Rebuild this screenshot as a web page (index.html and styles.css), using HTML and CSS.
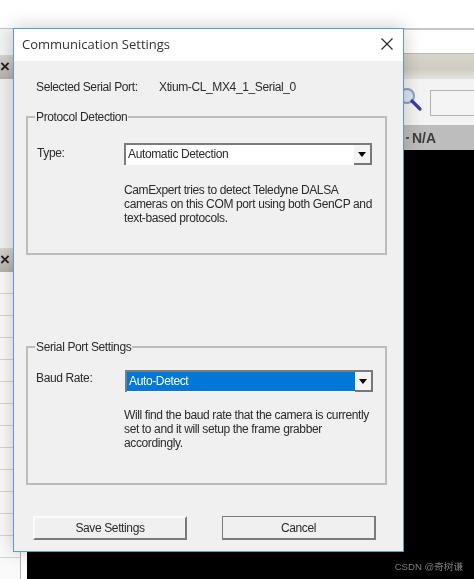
FILE: index.html
```html
<!DOCTYPE html>
<html lang="en">
<head>
<meta charset="utf-8">
<title>Communication Settings</title>
<link rel="stylesheet" href="styles.css">
</head>
<body>
<div class="desktop">
  <div class="win-left">
    <div class="left-top"></div>
    <div class="left-bar"><span class="left-x">×</span></div>
    <div class="left-mid"></div>
    <div class="left-bar"><span class="left-x">×</span></div>
    <div class="left-list">
      <div class="left-row"></div><div class="left-row"></div><div class="left-row"></div><div class="left-row"></div>
      <div class="left-row"></div><div class="left-row"></div><div class="left-row"></div><div class="left-row"></div>
      <div class="left-row"></div><div class="left-row"></div><div class="left-row"></div><div class="left-row"></div>
      <div class="left-row"></div><div class="left-row"></div>
    </div>
  </div>

  <div class="win-main">
    <div class="main-top"></div>
    <div class="main-caption"></div>
    <div class="main-toolbar">
      <svg class="search" width="24" height="28" viewBox="0 0 24 28" aria-hidden="true">
        <circle cx="8" cy="10" r="7" fill="#dce6f2" stroke="#8a9fc0" stroke-width="2"/>
        <path d="M13 15l8 8" stroke="#3a3ab0" stroke-width="3.2" stroke-linecap="round"/>
      </svg>
      <div class="main-input"></div>
    </div>
    <div class="main-status"><span class="status-dot"></span><span>N/A</span></div>
    <div class="main-view"><span class="watermark">CSDN @奇树谦</span></div>
  </div>

  <div class="dialog">
    <div class="titlebar">
      <span class="title">Communication Settings</span>
      <svg class="close" width="12" height="12" viewBox="0 0 12 12" aria-hidden="true">
        <path d="M.5.5l11 11M11.5.5l-11 11" stroke="#2b2b2b" stroke-width="1.2" fill="none"/>
      </svg>
    </div>
    <div class="body">
      <div class="port-row">
        <span class="port-label">Selected Serial Port:</span>
        <span>Xtium-CL_MX4_1_Serial_0</span>
      </div>

      <fieldset class="group group-protocol">
        <legend>Protocol Detection</legend>
        <div class="field field-protocol">
          <span class="field-label">Type:</span>
          <div class="combo">
            <span class="combo-value">Automatic Detection</span>
            <span class="combo-btn"><span class="arrow"></span></span>
          </div>
        </div>
        <p class="note note-protocol">CamExpert tries to detect Teledyne DALSA<br>cameras on this COM port using both GenCP and<br>text-based protocols.</p>
      </fieldset>

      <fieldset class="group group-serial">
        <legend>Serial Port Settings</legend>
        <div class="field field-serial">
          <span class="field-label">Baud Rate:</span>
          <div class="combo">
            <span class="combo-value selected">Auto-Detect</span>
            <span class="combo-btn"><span class="arrow"></span></span>
          </div>
        </div>
        <p class="note note-serial">Will find the baud rate that the camera is currently<br>set to and it will setup the frame grabber<br>accordingly.</p>
      </fieldset>

      <div class="actions">
        <button class="btn" type="button">Save Settings</button>
        <button class="btn btn-default" type="button">Cancel</button>
      </div>
    </div>
  </div>
</div>
</body>
</html>
```
FILE: styles.css
```css
* { box-sizing: border-box; }
html, body { margin: 0; padding: 0; background: #fff; }
body { font-family: "Liberation Sans", Arial, sans-serif; font-size: 12px; letter-spacing: -.37px; line-height: 14px; color: #2a2a2a; }

.desktop { position: relative; width: 474px; height: 579px; overflow: hidden; background: #fff; filter: blur(.35px); }

/* background windows */
.win-left { position: absolute; left: 0; top: 28px; width: 27px; height: 551px; display: flex; flex-direction: column; }
.left-top { height: 27px; background: #f4f4f4; border-top: 1px solid #c4c4c4; }
.left-bar { height: 24px; background: linear-gradient(#d8d5cf, #b4b2ac); display: flex; align-items: center; }
.left-x { font-size: 17px; font-weight: bold; color: #222; }
.left-mid { height: 169px; background: #f1f1f1; }
.left-list { flex: 1; overflow: hidden; background: #fff; border-right: 6px solid #fff; }
.left-row { height: 22px; width: 21px; border-bottom: 1px solid #d4d4d4; border-right: 1px solid #b4b4b4; background: #fafafa; }

.win-main { position: absolute; left: 27px; top: 28px; right: 0; bottom: 0; display: flex; flex-direction: column; }
.main-top { height: 26px; background: #fff; border-top: 2px solid #c8c8c8; border-bottom: 1px solid #b8b8b8; }
.main-caption { height: 25px; background: linear-gradient(#d9d5cb, #cfccc3 60%, #e4e2dc); }
.main-toolbar { height: 46px; background: #f3f3f3; display: flex; justify-content: flex-end; align-items: flex-start; }
.search { margin-top: 7px; margin-right: 7px; }
.main-input { width: 44px; height: 26px; margin-top: 11px; background: #f4f4f4; border: 1px solid #b2b2b2; border-right: 0; }
.main-status { height: 25px; background: #bdbdbd; display: flex; align-items: center; justify-content: flex-end; gap: 3px; padding-right: 38px; font-size: 14px; letter-spacing: 0; font-weight: bold; color: #3c3c3c; }
.status-dot { width: 3px; height: 2px; background: #555; }
.main-view { flex: 1; background: #000; display: flex; align-items: flex-end; justify-content: flex-end; padding: 0 11px 6px 0; }
.watermark { font-family: "Liberation Sans", "Noto Sans CJK SC", sans-serif; font-size: 9.6px; letter-spacing: 0; line-height: 13px; color: #7e7e7e; }

/* dialog */
.dialog { position: absolute; left: 13px; top: 28px; width: 391px; height: 524px; display: flex; flex-direction: column; background: #f0f0f0; border: 1.5px solid #5b9bd5; box-shadow: 0 0 18px rgba(0, 0, 0, .22); }
.titlebar { height: 32px; flex: none; background: #fff; display: flex; align-items: center; justify-content: space-between; padding: 0 10px 2px 8px; }
.title { font-family: "Open Sans", sans-serif; font-size: 13px; letter-spacing: 0; color: #333; }
.close { display: block; }

.body { flex: 1; padding: 19px 0 0 12px; }
.port-row { display: grid; grid-template-columns: 123px auto; padding-left: 10px; }
.group { margin: 16px 0 0; padding: 0 0 0 9px; width: 361px; border: 2px solid #bcbcbc; }
.group legend { margin-left: -2px; padding: 0 1px; line-height: 14px; }
.group-protocol { height: 145px; }
.group-serial { height: 145px; margin-top: 85px; }

.field { display: grid; grid-template-columns: 87px 248px; align-items: center; }
.field-protocol { margin-top: 19px; }
.field-serial { margin-top: 16px; margin-left: -1px; grid-template-columns: 89px 248px; }
.field-protocol .field-label { margin-top: -3px; }
.field-serial .field-label { margin-top: -7px; }

.combo { height: 22px; display: flex; background: #fff; border: solid #7c7c7c; border-width: 2px 0 0 2px; }
.combo-value { flex: 1; padding-left: 2px; height: 19px; line-height: 19px; white-space: nowrap; }
.combo-value.selected { background: #0078d7; color: #fff; }
.combo-btn { width: 18px; display: flex; align-items: center; justify-content: center; background: #f4f4f4; border: solid #777; border-width: 0 2px 2px 0; }
.arrow { width: 0; height: 0; border: 4.5px solid transparent; border-top: 5px solid #000; border-bottom: 0; }

.note { margin: 18px 0 0 87px; white-space: nowrap; }
.note-serial { margin-top: 16px; }

.actions { display: flex; gap: 35px; margin-top: 31px; padding-left: 7px; }
.btn { width: 154px; height: 24px; padding: 0; font: inherit; letter-spacing: inherit; color: #2a2a2a; background: #f0f0f0; border: 2px solid; border-color: #fafafa #7a7a7a #7a7a7a #fafafa; }
.btn-default { border-color: #7a7a7a; border-top-width: 1px; border-left-width: 1px; }
```
